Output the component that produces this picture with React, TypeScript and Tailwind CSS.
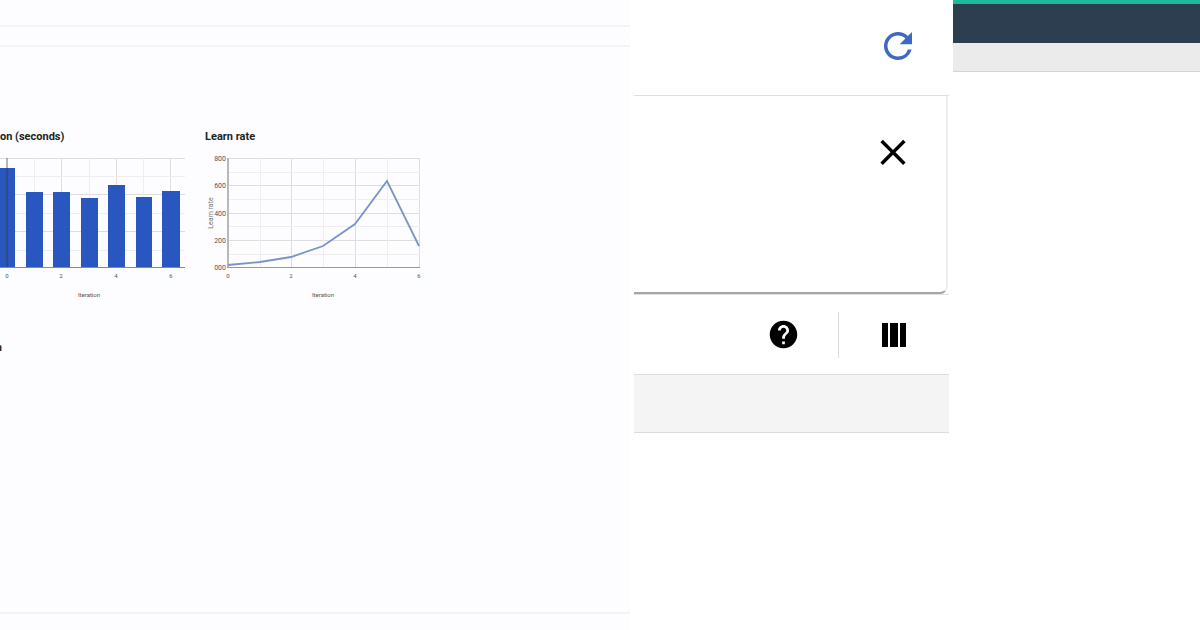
const bars = [
  { x: -3, y: 168, w: 18 },
  { x: 26, y: 192, w: 17 },
  { x: 53, y: 192, w: 17 },
  { x: 81, y: 198, w: 17 },
  { x: 108, y: 185, w: 17 },
  { x: 136, y: 197, w: 16 },
  { x: 162, y: 191, w: 18 },
];

const DurationChart = () => (
  <svg
    className="block h-40 w-[190px] font-['Roboto',sans-serif] text-[6px]"
    viewBox="0 145 190 160"
  >
    <g fill="#dddde1">
      <rect x="0" y="158" width="185" height="1" />
      <rect x="0" y="194" width="185" height="1" />
      <rect x="0" y="231" width="185" height="1" />
      <rect x="61" y="158" width="1" height="110" />
      <rect x="116" y="158" width="1" height="110" />
      <rect x="170" y="158" width="1" height="110" />
    </g>
    <g fill="#eeeef1">
      <rect x="0" y="176" width="185" height="1" />
      <rect x="0" y="213" width="185" height="1" />
      <rect x="0" y="250" width="185" height="1" />
      <rect x="34" y="158" width="1" height="110" />
      <rect x="89" y="158" width="1" height="110" />
      <rect x="143" y="158" width="1" height="110" />
    </g>
    {bars.map((bar) => (
      <rect
        key={bar.x}
        x={bar.x}
        y={bar.y}
        width={bar.w}
        height={268 - bar.y}
        fill="#2a56c0"
      />
    ))}
    <rect x="6" y="158" width="2" height="110" fill="#333" fillOpacity="0.35" />
    <rect x="0" y="267" width="185" height="1" fill="#888" />
    <g fill="#555" textAnchor="middle">
      <text x="7" y="278">0</text>
      <text x="61" y="278">2</text>
      <text x="116" y="278">4</text>
      <text x="171" y="278">6</text>
      <text x="89" y="297">Iteration</text>
    </g>
  </svg>
);

const LearnRateChart = () => (
  <svg
    className="block h-40 w-[225px] font-['Roboto',sans-serif] text-[6px]"
    viewBox="205 145 225 160"
  >
    <g fill="#dddde1">
      <rect x="228" y="158" width="192" height="1" />
      <rect x="228" y="185" width="192" height="1" />
      <rect x="228" y="213" width="192" height="1" />
      <rect x="228" y="240" width="192" height="1" />
      <rect x="291" y="158" width="1" height="110" />
      <rect x="355" y="158" width="1" height="110" />
      <rect x="419" y="158" width="1" height="110" />
    </g>
    <g fill="#eeeef1">
      <rect x="228" y="172" width="192" height="1" />
      <rect x="228" y="199" width="192" height="1" />
      <rect x="228" y="226" width="192" height="1" />
      <rect x="228" y="254" width="192" height="1" />
      <rect x="260" y="158" width="1" height="110" />
      <rect x="323" y="158" width="1" height="110" />
      <rect x="387" y="158" width="1" height="110" />
    </g>
    <rect x="227" y="158" width="2" height="110" fill="#b8b8bc" />
    <rect x="227" y="267" width="193" height="1" fill="#999" />
    <polyline
      points="228,265 260,262 291,257 323,246 355,224 387,181 419,246"
      fill="none"
      stroke="#7995c8"
      strokeWidth="1.8"
    />
    <g fill="#555" textAnchor="end" className="text-[7px]">
      <text x="226" y="161">800</text>
      <text x="226" y="188">600</text>
      <text x="226" y="216">400</text>
      <text x="226" y="243">200</text>
      <text x="226" y="270">000</text>
    </g>
    <g fill="#555" textAnchor="middle">
      <text x="228" y="278">0</text>
      <text x="291" y="278">2</text>
      <text x="355" y="278">4</text>
      <text x="419" y="278">6</text>
      <text x="323" y="297">Iteration</text>
      <text
        className="text-[7px]"
        fill="#777"
        transform="translate(213 213) rotate(-90)"
      >
        Learn rate
      </text>
    </g>
  </svg>
);

const ChartsPanel = () => (
  <section className="flex min-w-0 flex-col overflow-hidden bg-[#fdfcfe] font-['Roboto',sans-serif]">
    <div className="h-[27px] border-b-2 border-[#f3f3f5]" />
    <div className="h-5 border-b-2 border-[#f3f3f5]" />
    <div className="flex gap-[15px] pt-20">
      <div>
        <h2 className="pt-0.5 text-[11px] leading-4 font-bold text-[#222]">
          on (seconds)
        </h2>
        <DurationChart />
      </div>
      <div>
        <h2 className="pt-0.5 text-[11px] leading-4 font-bold text-[#222]">
          Learn rate
        </h2>
        <LearnRateChart />
      </div>
    </div>
    <h2 className="flex w-0.5 grow justify-end pt-[35px] text-[11px] leading-4 font-bold text-[#222]">
      n
    </h2>
    <div className="h-[18px] border-t-2 border-[#f3f3f5]" />
  </section>
);

const ToolsPanel = () => (
  <section className="min-w-0">
    <div className="flex h-24 items-center justify-end border-b border-[#dfdfdf] pr-[30px] pb-1">
      <button type="button" aria-label="Refresh" className="text-[#3f67c4]">
        <svg className="block size-[42px]" viewBox="0 0 24 24" fill="currentColor">
          <path d="M17.65 6.35A7.958 7.958 0 0 0 12 4a8 8 0 1 0 7.73 10h-2.08A5.99 5.99 0 0 1 12 18c-3.31 0-6-2.69-6-6s2.69-6 6-6c1.66 0 3.14.69 4.22 1.78L13 11h7V4l-2.35 2.35z" />
        </svg>
      </button>
    </div>
    <div className="border-b border-[#e0e0e0] pr-px">
      <div className="flex h-[198px] justify-end rounded-br-lg border-r-2 border-b-2 border-r-[#eee] border-b-[#a6a6a6] pt-[35px] pr-8">
        <button type="button" aria-label="Close" className="h-fit">
          <svg className="block size-[42px]" viewBox="0 0 24 24" fill="currentColor">
            <path d="M19.2 6.41 17.79 5 12 10.79 6.21 5 4.8 6.41 10.59 12.2 4.8 17.99 6.21 19.4 12 13.61 17.79 19.4 19.2 17.99 13.41 12.2z" />
          </svg>
        </button>
      </div>
    </div>
    <div className="flex h-20 items-center justify-end border-b border-[#dcdcdc] pr-[38px]">
      <button type="button" aria-label="Help">
        <svg className="block size-[33px]" viewBox="0 0 24 24" fill="currentColor">
          <path d="M12 2C6.48 2 2 6.48 2 12s4.48 10 10 10 10-4.48 10-10S17.52 2 12 2zm1 17h-2v-2h2v2zm2.07-7.75-.9.92C13.45 12.9 13 13.5 13 15h-2v-.5c0-1.1.45-2.1 1.17-2.83l1.24-1.26c.37-.36.59-.86.59-1.41 0-1.1-.9-2-2-2s-2 .9-2 2H8c0-2.21 1.79-4 4-4s4 1.79 4 4c0 .88-.36 1.68-.93 2.25z" />
        </svg>
      </button>
      <div className="mx-[38px] h-[46px] w-px bg-[#dcdcdc]" />
      <button type="button" aria-label="Columns">
        <svg className="block size-[34px]" viewBox="0 0 34 34" fill="currentColor">
          <path d="M5 5h6v24H5zM13 5h8v24h-8zM23 5h6v24h-6z" />
        </svg>
      </button>
    </div>
    <div className="h-[58px] border-b border-[#dcdcdc] bg-[#f4f4f4]" />
  </section>
);

const BlankPanel = () => (
  <section className="min-w-0">
    <div className="h-[43px] border-t-4 border-[#1abc9c] bg-[#2c3e50]" />
    <div className="h-[29px] border-b border-[#d4d4d4] bg-[#ebebeb]" />
  </section>
);

const App = () => (
  <main className="grid min-h-screen grid-cols-[630fr_315fr_247fr] gap-1 bg-white">
    <ChartsPanel />
    <ToolsPanel />
    <BlankPanel />
  </main>
);

export default App;
